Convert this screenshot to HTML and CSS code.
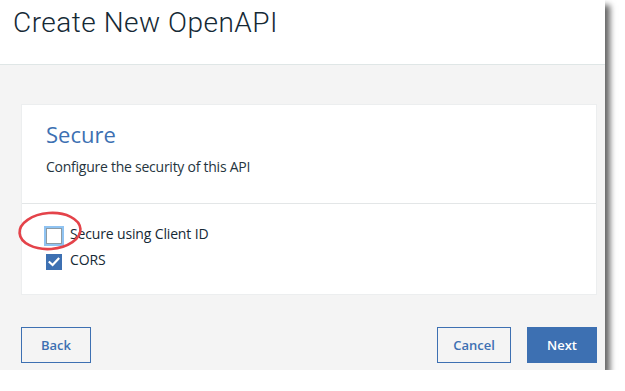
FILE: index.html
```html
<!DOCTYPE html>
<html lang="en">
<head>
<meta charset="utf-8">
<title>Create New OpenAPI</title>
<link rel="stylesheet" href="styles.css">
</head>
<body>
<div class="dialog">
  <header class="dialog-header">
    <h1 class="dialog-title">Create New OpenAPI</h1>
  </header>
  <main class="dialog-body">
    <section class="card">
      <div class="card-head">
        <h2 class="card-title">Secure</h2>
        <p class="card-desc">Configure the security of this API</p>
      </div>
      <div class="card-options">
        <label class="option">
          <span class="checkbox checkbox-focus"></span>
          <span class="option-label">Secure using Client ID</span>
        </label>
        <label class="option">
          <span class="checkbox checkbox-checked">
            <svg viewBox="0 0 16 16" width="16" height="16" aria-hidden="true"><path d="M3.6 8.2 L6.6 11 L12.4 4.8" fill="none" stroke="#ffffff" stroke-width="2.2" stroke-linecap="square"/></svg>
          </span>
          <span class="option-label">CORS</span>
        </label>
      </div>
      <svg class="annotation" viewBox="0 0 68 42" width="68" height="42" aria-hidden="true"><ellipse cx="34" cy="21" rx="30.5" ry="18" fill="none" stroke="#e4434a" stroke-width="2.6" transform="rotate(-4 34 21)"/></svg>
    </section>
    <div class="actions">
      <button class="btn btn-secondary">Back</button>
      <div class="actions-right">
        <button class="btn btn-secondary">Cancel</button>
        <button class="btn btn-primary">Next</button>
      </div>
    </div>
  </main>
</div>
</body>
</html>
```
FILE: styles.css
```css
* { box-sizing: border-box; }
html, body { margin: 0; padding: 0; background: #ffffff; }
body { font-family: "Open Sans", "Liberation Sans", sans-serif; color: #152935; }

.dialog {
  width: 605px;
  height: 370px;
  display: flex;
  flex-direction: column;
  background: #f4f4f4;
  box-shadow: 5px 5px 6px rgba(0, 0, 0, 0.6);
}

.dialog-header {
  height: 65px;
  flex: none;
  background: #ffffff;
  border-bottom: 1px solid #dfe6e6;
  padding: 7px 0 0 13px;
}

.dialog-title {
  margin: 0;
  font-family: Roboto, "Open Sans", sans-serif;
  font-weight: 300;
  font-size: 28px;
  line-height: 32px;
  letter-spacing: 0.5px;
  color: #152935;
}

.dialog-body {
  flex: 1;
  padding: 39px 8px 0 21px;
  display: flex;
  flex-direction: column;
}

.card {
  position: relative;
  height: 191px;
  background: #ffffff;
  border: 1px solid #eceeef;
}

.card-head {
  height: 99px;
  border-bottom: 1px solid #e3e6e7;
  padding: 15px 0 0 24px;
}

.card-title {
  margin: 0;
  font-weight: 400;
  font-size: 22px;
  line-height: 28px;
  color: #3d70b2;
}

.card-desc {
  margin: 9px 0 0;
  font-size: 14px;
  line-height: 20px;
  letter-spacing: -0.25px;
  color: #253540;
}

.card-options {
  padding: 19px 0 0 24px;
}

.option {
  display: flex;
  align-items: flex-start;
  height: 26px;
}

.checkbox {
  flex: none;
  width: 16px;
  height: 16px;
  margin-top: 5px;
  margin-right: 8px;
  display: flex;
  align-items: center;
  justify-content: center;
}

.checkbox-focus {
  background: #ffffff;
  border: 1px solid #8c9ba5;
  outline: 2px solid #8fc3f2;
}

.checkbox-checked {
  background: #3d70b2;
}

.option-label {
  font-size: 14px;
  line-height: 22px;
  letter-spacing: -0.15px;
  color: #152935;
}

.annotation {
  position: absolute;
  left: -6px;
  top: 105px;
}

.actions {
  margin-top: 32px;
  display: flex;
  justify-content: space-between;
}

.actions-right {
  display: flex;
  gap: 16px;
}

.btn {
  height: 36px;
  padding: 0;
  font-family: "Open Sans", sans-serif;
  font-size: 13px;
  font-weight: 600;
  border: 1px solid #3d70b2;
  cursor: pointer;
}

.btn-secondary {
  background: transparent;
  color: #3d70b2;
  width: 70px;
}

.actions-right .btn-secondary { width: 74px; }

.btn-primary {
  background: #3d70b2;
  color: #ffffff;
  width: 70px;
}
```
